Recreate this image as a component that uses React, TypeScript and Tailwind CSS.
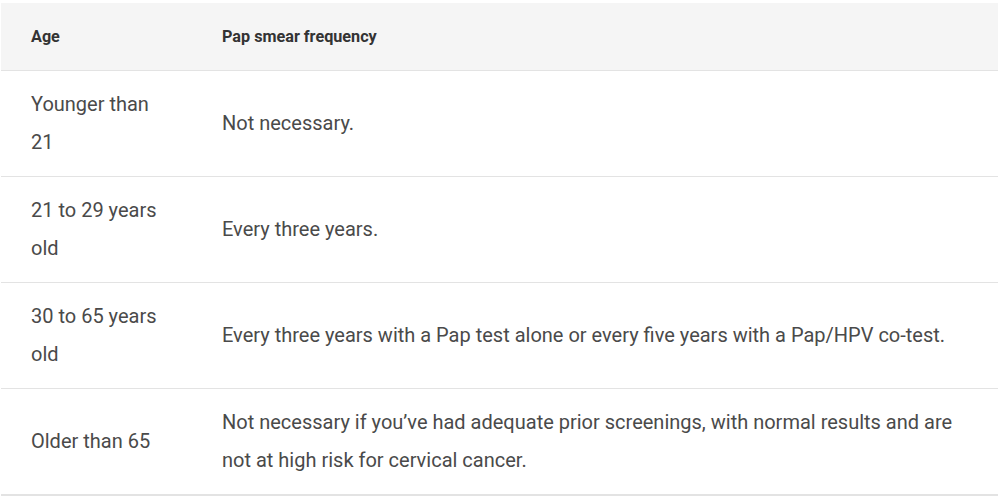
import React from 'react'

interface Row {
  age: string
  frequency: string
}

const rows: Row[] = [
  { age: 'Younger than 21', frequency: 'Not necessary.' },
  { age: '21 to 29 years old', frequency: 'Every three years.' },
  {
    age: '30 to 65 years old',
    frequency: 'Every three years with a Pap test alone or every five years with a Pap/HPV co-test.',
  },
  {
    age: 'Older than 65',
    frequency:
      'Not necessary if you\u2019ve had adequate prior screenings, with normal results and are not at high risk for cervical cancer.',
  },
]

export default function App() {
  return (
    <div className="min-h-screen bg-white pt-[3px] pl-px font-['Roboto',sans-serif]">
      <table className="w-[997px] table-fixed border-collapse text-left">
        <colgroup>
          <col className="w-[191px]" />
          <col />
        </colgroup>
        <thead>
          <tr className="h-[67px] border-b border-[#e3e3e3] bg-[#f5f5f5]">
            <th className="px-[30px] pt-[2px] text-[16.2px] font-bold text-[#333]">Age</th>
            <th className="px-[30px] pt-[2px] text-[16.2px] font-bold text-[#333]">Pap smear frequency</th>
          </tr>
        </thead>
        <tbody>
          {rows.map((row, i) => (
            <tr
              key={row.age}
              className={
                i === rows.length - 1
                  ? 'h-[107px] border-b-2 border-[#e3e3e3]'
                  : 'h-[106px] border-b border-[#e3e3e3]'
              }
            >
              <td className="px-[30px] text-[20px] leading-[38px] text-[#4a4a4a]">{row.age}</td>
              <td className="px-[30px] text-[20px] leading-[38px] text-[#4a4a4a]">{row.frequency}</td>
            </tr>
          ))}
        </tbody>
      </table>
    </div>
  )
}
